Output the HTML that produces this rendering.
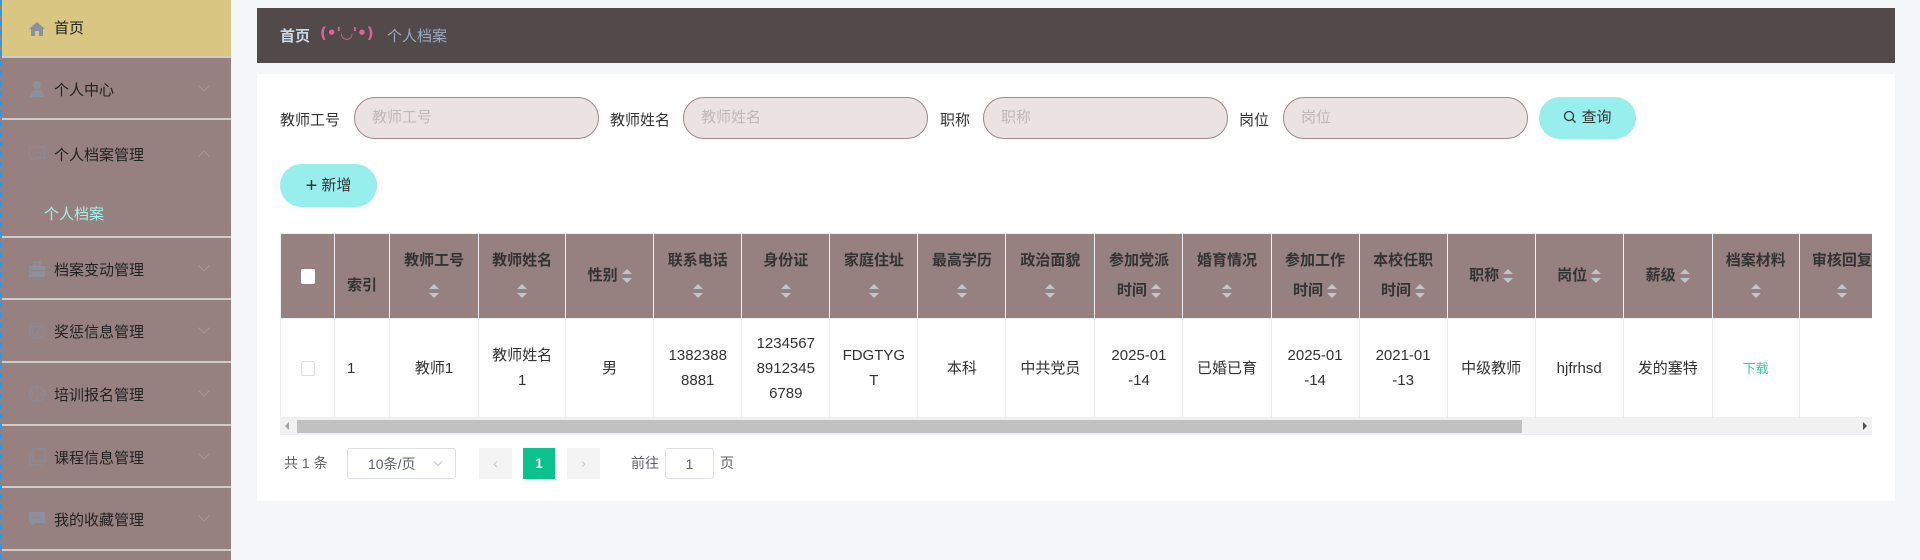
<!DOCTYPE html>
<html><head><meta charset="utf-8"><style>
*{box-sizing:border-box;margin:0;padding:0}
body{width:1920px;height:560px;overflow:hidden;background:#f5f6f8;font-family:"Liberation Sans","Noto Sans CJK SC",sans-serif;font-size:15px;color:#333;position:relative}
.side{position:absolute;left:0;top:0;width:231px;height:560px;background:#978080;border-left:2px dashed #2a9cf0}
.it{position:absolute;left:0;width:229px;border-bottom:2px solid #d0cccc;color:#222;font-size:15px}
.it .ic{position:absolute;left:26px;width:18px;height:18px}
.it .tx{position:absolute;left:52px}
.it .ch{position:absolute;left:198px;width:8px;height:8px;border-right:1px solid #aa9494;border-bottom:1px solid #aa9494;transform:rotate(45deg)}
.hdr{position:absolute;left:257px;top:8px;width:1638px;height:55px;background:#524a4a}
.panel{position:absolute;left:257px;top:74px;width:1638px;height:427px;background:#fff}
.lbl{position:absolute;top:109px;font-size:15px;color:#333}
.inp{position:absolute;top:97px;height:42px;width:245px;border:1px solid #a08888;border-radius:21px;background:#ebe3e3;color:#c0b8b8;padding-left:17px;line-height:40px;font-size:15px}
.btn{position:absolute;background:#98eded;border-radius:22px;color:#333;font-size:15px;text-align:center}
table{border-collapse:collapse;table-layout:fixed}
th{background:#978080;color:#333;font-weight:bold;height:85px;border:1px solid #ebeef5;font-size:15px;line-height:30px;text-align:center;padding:0 4px}
td{height:99px;border:1px solid #ebeef5;text-align:center;font-size:15px;line-height:25px;padding:0 2px;white-space:nowrap}
.s{display:inline-block;width:10px;height:16px;vertical-align:middle;position:relative}
.s:before{content:"";position:absolute;left:0;top:1px;border:5px solid transparent;border-bottom-color:#c0c4cc;border-top:0}
.s:after{content:"";position:absolute;left:0;top:10px;border:5px solid transparent;border-top-color:#c0c4cc;border-bottom:0}
.pg{position:absolute;top:448px;height:31px;font-size:14px;line-height:31px}
</style></head><body>
<div class="side">
 <div class="it" style="top:0;height:58px;background:#d8c682;border-bottom:2px solid #d0cccc"><svg class="ic" style="top:20px" viewBox="0 0 18 18"><path d="M9 2L1 9h2v7h4v-5h4v5h4V9h2z" fill="#8a909c"/></svg><span class="tx" style="top:17px">首页</span></div>
 <div class="it" style="top:58px;height:62px"><svg class="ic" style="top:22px" viewBox="0 0 18 18"><circle cx="9" cy="5" r="4" fill="#8a909c"/><path d="M2 17c0-5 3-7 7-7s7 2 7 7z" fill="#8a909c"/></svg><span class="tx" style="top:21px">个人中心</span><span class="ch" style="top:24px"></span></div>
 <div class="it" style="top:120px;height:118px"><svg class="ic" style="top:25px" viewBox="0 0 18 18"><path d="M1.5 2h15v11h-9l-4 3v-3h-2z" fill="none" stroke="#8a8a9a" stroke-width="1.2"/><circle cx="6" cy="7.5" r=".9" fill="#8a8a9a"/><circle cx="9" cy="7.5" r=".9" fill="#8a8a9a"/><circle cx="12" cy="7.5" r=".9" fill="#8a8a9a"/></svg><span class="tx" style="top:24px">个人档案管理</span><span class="ch" style="top:32px;transform:rotate(225deg)"></span>
 <span style="position:absolute;left:42px;top:83px;color:#a3f1ea">个人档案</span></div>
 <div class="it" style="top:238px;height:62px"><svg class="ic" style="top:22px" viewBox="0 0 18 18"><rect x="1" y="6" width="16" height="11" fill="#8a909c"/><rect x="6" y="2" width="6" height="4" fill="none" stroke="#8a909c" stroke-width="1.5"/><rect x="1" y="10" width="16" height="1.2" fill="#978080"/></svg><span class="tx" style="top:21px">档案变动管理</span><span class="ch" style="top:24px"></span></div>
 <div class="it" style="top:300px;height:63px"><svg class="ic" style="top:22px" viewBox="0 0 18 18"><circle cx="9" cy="9" r="7.5" fill="none" stroke="#8a8a9a" stroke-width="1.3"/><circle cx="9" cy="9" r="5" fill="none" stroke="#8a8a9a" stroke-width="1"/><path d="M9 12l2-6" stroke="#8a8a9a" stroke-width="1.3"/></svg><span class="tx" style="top:21px">奖惩信息管理</span><span class="ch" style="top:24px"></span></div>
 <div class="it" style="top:363px;height:63px"><svg class="ic" style="top:22px" viewBox="0 0 18 18"><circle cx="9" cy="9" r="7.5" fill="none" stroke="#8a8a9a" stroke-width="1.3"/><path d="M9 1v5M9 12v5M1 9h5M12 9h5" stroke="#8a8a9a" stroke-width="1.3"/></svg><span class="tx" style="top:21px">培训报名管理</span><span class="ch" style="top:24px"></span></div>
 <div class="it" style="top:426px;height:62px"><svg class="ic" style="top:22px" viewBox="0 0 18 18"><rect x="5" y="1" width="12" height="12" fill="none" stroke="#8a8a9a" stroke-width="1.3"/><path d="M2 5v12h12" fill="none" stroke="#8a8a9a" stroke-width="1.3"/></svg><span class="tx" style="top:21px">课程信息管理</span><span class="ch" style="top:24px"></span></div>
 <div class="it" style="top:488px;height:63px"><svg class="ic" style="top:22px" viewBox="0 0 18 18"><path d="M1 2h16v11H7l-4 3v-3H1z" fill="#8a909c"/><circle cx="6" cy="7.5" r="1" fill="#978080"/><circle cx="9" cy="7.5" r="1" fill="#978080"/><circle cx="12" cy="7.5" r="1" fill="#978080"/></svg><span class="tx" style="top:21px">我的收藏管理</span><span class="ch" style="top:24px"></span></div>
</div>
<div class="hdr"><span style="position:absolute;left:23px;top:17px;font-size:15px;font-weight:bold;color:#cdd8ec">首页</span><span style="position:absolute;left:63px;top:16px;font-size:15px;color:#e6609e;font-weight:bold;font-family:'DejaVu Sans',sans-serif">(•'◡'•)</span><span style="position:absolute;left:130px;top:17px;font-size:15px;color:#9aa8c0">个人档案</span></div>
<div class="panel"></div>
<span class="lbl" style="left:280px">教师工号</span><div class="inp" style="left:354px">教师工号</div>
<span class="lbl" style="left:610px">教师姓名</span><div class="inp" style="left:683px">教师姓名</div>
<span class="lbl" style="left:940px">职称</span><div class="inp" style="left:983px">职称</div>
<span class="lbl" style="left:1239px">岗位</span><div class="inp" style="left:1283px">岗位</div>
<div class="btn" style="left:1539px;top:97px;width:97px;height:42px;line-height:42px"><svg width="14" height="14" viewBox="0 0 14 14" style="vertical-align:-2px;margin-right:4px"><circle cx="6" cy="6" r="4.5" fill="none" stroke="#333" stroke-width="1.3"/><path d="M9.5 9.5l3 3" stroke="#333" stroke-width="1.3"/></svg>查询</div>
<div class="btn" style="left:280px;top:164px;width:97px;height:43px;line-height:43px"><span style="font-size:20px;font-weight:300;vertical-align:-2px;margin-right:4px">+</span>新增</div>
<div style="position:absolute;left:280px;top:233px;width:1592px;height:185px;overflow:hidden">
<table style="width:1680px">
<colgroup><col style="width:54px"><col style="width:55px"><col style="width:89px"><col style="width:87px"><col style="width:88px"><col style="width:88px"><col style="width:88px"><col style="width:88px"><col style="width:88px"><col style="width:89px"><col style="width:88px"><col style="width:88px"><col style="width:88px"><col style="width:88px"><col style="width:88px"><col style="width:88px"><col style="width:89px"><col style="width:87px"><col style="width:160px"></colgroup>
<tr><th><span style="display:inline-block;width:14px;height:15px;background:#fff;border-radius:2px;vertical-align:middle"></span></th><th style="padding-top:20px">索引</th><th>教师工号<br><span class="s"></span></th><th>教师姓名<br><span class="s"></span></th><th>性别 <span class="s"></span></th><th>联系电话<br><span class="s"></span></th><th>身份证<br><span class="s"></span></th><th>家庭住址<br><span class="s"></span></th><th>最高学历<br><span class="s"></span></th><th>政治面貌<br><span class="s"></span></th><th>参加党派<br>时间 <span class="s"></span></th><th>婚育情况<br><span class="s"></span></th><th>参加工作<br>时间 <span class="s"></span></th><th>本校任职<br>时间 <span class="s"></span></th><th>职称 <span class="s"></span></th><th>岗位 <span class="s"></span></th><th>薪级 <span class="s"></span></th><th>档案材料<br><span class="s"></span></th><th style="text-align:left;padding-left:12px">审核回复<br>&nbsp;&nbsp;&nbsp;&nbsp;&nbsp;&nbsp;<span class="s"></span></th></tr>
<tr><td><span style="display:inline-block;width:14px;height:15px;border:1px solid #dcdfe6;border-radius:2px;vertical-align:middle"></span></td><td style="text-align:left;padding:0 12px">1</td><td>教师1</td><td>教师姓名<br>1</td><td>男</td><td>1382388<br>8881</td><td>1234567<br>8912345<br>6789</td><td>FDGTYG<br>T</td><td>本科</td><td>中共党员</td><td>2025-01<br>-14</td><td>已婚已育</td><td>2025-01<br>-14</td><td>2021-01<br>-13</td><td>中级教师</td><td>hjfrhsd</td><td>发的塞特</td><td style="color:#3fc6a0;font-size:13px">下载</td><td></td></tr>
</table></div>
<div style="position:absolute;left:280px;top:418px;width:1592px;height:17px;background:#f1f1f1;border-bottom:1px solid #ebeef5"><div style="position:absolute;left:17px;top:2px;width:1225px;height:13px;background:#c1c1c1"></div><span style="position:absolute;left:5px;top:4px;border:4px solid transparent;border-right-color:#a3a3a3;border-left:0"></span><span style="position:absolute;right:5px;top:4px;border:4px solid transparent;border-left-color:#505050;border-right:0"></span></div>
<span class="pg" style="left:284px;color:#606266">共 1 条</span>
<div class="pg" style="left:347px;width:109px;border:1px solid #dcdfe6;border-radius:3px;color:#606266;padding-left:20px">10条/页<span style="position:absolute;right:14px;top:10px;width:6px;height:6px;border-right:1px solid #c0c4cc;border-bottom:1px solid #c0c4cc;transform:rotate(45deg)"></span></div>
<div class="pg" style="left:479px;width:33px;background:#f4f4f5;color:#c0c4cc;text-align:center">‹</div>
<div class="pg" style="left:523px;width:32px;background:#0bc28f;color:#fff;text-align:center;font-weight:bold">1</div>
<div class="pg" style="left:567px;width:33px;background:#f4f4f5;color:#c0c4cc;text-align:center">›</div>
<span class="pg" style="left:631px;color:#606266">前往</span>
<div class="pg" style="left:665px;width:49px;border:1px solid #dcdfe6;border-radius:3px;text-align:center;color:#606266">1</div>
<span class="pg" style="left:720px;color:#606266">页</span>
</body></html>
